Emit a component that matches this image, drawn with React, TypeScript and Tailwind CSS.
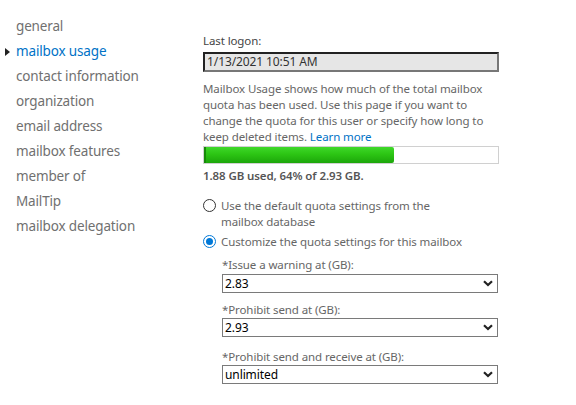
import React from "react";

const navItems = [
  "general",
  "mailbox usage",
  "contact information",
  "organization",
  "email address",
  "mailbox features",
  "member of",
  "MailTip",
  "mailbox delegation",
];

function Chevron() {
  return (
    <svg width="10" height="7" viewBox="0 0 10 7" className="shrink-0">
      <path d="M1 1.2 L5 5 L9 1.2" fill="none" stroke="#222" strokeWidth="2.2" />
    </svg>
  );
}

function Select({ value }: { value: string }) {
  return (
    <div className="flex h-[19px] w-[276px] items-center justify-between border border-[#7a7a7a] bg-white pl-[2px] pr-[4px] text-[12px] tracking-[-0.1px] text-black">
      <span>{value}</span>
      <Chevron />
    </div>
  );
}

export default function App() {
  return (
    <div
      className="flex h-[405px] w-[576px] bg-white"
      style={{ fontFamily: '"Segoe UI", "Noto Sans", "Open Sans", sans-serif' }}
    >
      <div className="flex w-[203px] shrink-0 flex-col pt-[14px]">
        {navItems.map((item) => {
          const active = item === "mailbox usage";
          return (
            <div key={item} className="relative flex h-[25px] items-center pl-[16px]">
              {active && (
                <svg width="5" height="8" viewBox="0 0 5 8" className="absolute left-[5px] top-[9px]">
                  <path d="M0 0 L5 4 L0 8 Z" fill="#222" />
                </svg>
              )}
              <span
                className={
                  "text-[13.5px] leading-[25px] tracking-[-0.15px] " +
                  (active ? "text-[#0072c6]" : "text-[#707070]")
                }
              >
                {item}
              </span>
            </div>
          );
        })}
      </div>
      <div className="flex flex-col pt-[33px] text-[11.5px] tracking-[-0.1px] text-[#666]">
        <div className="leading-[16px] text-[#444]">Last logon:</div>
        <div className="mt-[3px] flex h-[20px] w-[296px] items-center border-2 border-t-[#222] border-l-[#222] border-r-[#777] border-b-[#777] bg-[#e6e6e6] pl-[2px] text-[12px] text-[#333]">
          1/13/2021 10:51 AM
        </div>
        <div className="mt-[9px] leading-[16px]">
          Mailbox Usage shows how much of the total mailbox
          <br />
          quota has been used. Use this page if you want to
          <br />
          change the quota for this user or specify how long to
          <br />
          keep deleted items. <span className="text-[#0072c6]">Learn more</span>
        </div>
        <div className="mt-[1px] flex h-[18px] w-[296px] border border-[#d0d0d0] bg-white">
          <div className="h-full w-[190px] rounded-r-[2px] bg-[linear-gradient(to_bottom,#3fd82a_0%,#2cc514_45%,#1ca60a_100%)] shadow-[inset_2px_0_0_#168a08]" />
        </div>
        <div className="mt-[4px] leading-[16px] font-semibold text-[#555]">
          1.88 GB used, 64% of 2.93 GB.
        </div>
        <div className="mt-[14px] flex items-start gap-[5px]">
          <div className="mt-[1px] h-[13px] w-[13px] shrink-0 rounded-full border border-[#333] bg-white" />
          <div className="leading-[16px]">
            Use the default quota settings from the
            <br />
            mailbox database
          </div>
        </div>
        <div className="mt-[4px] flex items-start gap-[5px]">
          <div className="mt-[1px] flex h-[13px] w-[13px] shrink-0 items-center justify-center rounded-full border-[1.5px] border-[#0078d7] bg-white">
            <div className="h-[7px] w-[7px] rounded-full bg-[#0078d7]" />
          </div>
          <div className="leading-[16px]">Customize the quota settings for this mailbox</div>
        </div>
        <div className="ml-[19px] mt-[8px] flex flex-col">
          <div className="leading-[14px]">*Issue a warning at (GB):</div>
          <div className="mt-[2px]">
            <Select value="2.83" />
          </div>
          <div className="mt-[10px] leading-[14px]">*Prohibit send at (GB):</div>
          <div className="mt-[1px]">
            <Select value="2.93" />
          </div>
          <div className="mt-[13px] leading-[14px]">*Prohibit send and receive at (GB):</div>
          <div className="mt-[1px]">
            <Select value="unlimited" />
          </div>
        </div>
      </div>
    </div>
  );
}
